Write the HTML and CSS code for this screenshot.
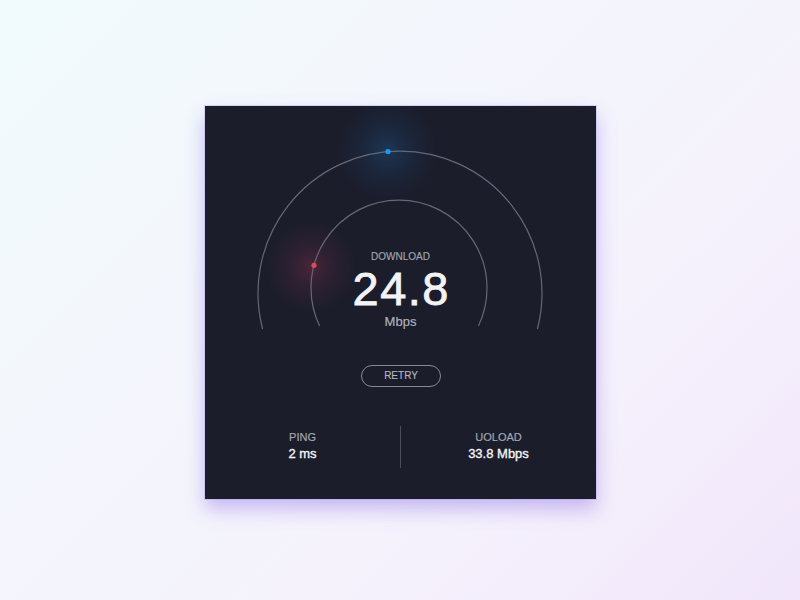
FILE: index.html
```html
<!DOCTYPE html>
<html>
<head>
<meta charset="utf-8">
<link rel="stylesheet" href="styles.css">
</head>
<body>
<div class="page">
  <div class="card">
    <svg class="gauge" width="391" height="393" viewBox="0 0 391 393" xmlns="http://www.w3.org/2000/svg">
      <defs>
        <radialGradient id="gBlue" cx="0.5" cy="0.5" r="0.5">
          <stop offset="0" stop-color="#1d5f96" stop-opacity="0.4"/>
          <stop offset="0.5" stop-color="#1d4f80" stop-opacity="0.18"/>
          <stop offset="1" stop-color="#1d4f80" stop-opacity="0"/>
        </radialGradient>
        <radialGradient id="gRed" cx="0.5" cy="0.5" r="0.5">
          <stop offset="0" stop-color="#7a2c45" stop-opacity="0.5"/>
          <stop offset="0.5" stop-color="#5e2a44" stop-opacity="0.24"/>
          <stop offset="1" stop-color="#5e2a44" stop-opacity="0"/>
        </radialGradient>
      </defs>
      <circle cx="182" cy="44" r="50" fill="url(#gBlue)"/>
      <circle cx="106" cy="161" r="46" fill="url(#gRed)"/>
      <path d="M 57.6 223 A 142 142 0 1 1 332.4 223" fill="none" stroke="#656876" stroke-width="1.2"/>
      <path d="M 114.6 220 A 88 88 0 1 1 273.4 220" fill="none" stroke="#656876" stroke-width="1.2"/>
      <circle cx="183" cy="45.5" r="2.6" fill="#1a9cf2"/>
      <circle cx="109" cy="159.3" r="2.6" fill="#e2475f"/>
    </svg>
    <div class="readout">
      <div class="label">DOWNLOAD</div>
      <div class="value">24.8</div>
      <div class="unit">Mbps</div>
    </div>
    <div class="actions">
      <button class="retry">RETRY</button>
    </div>
    <div class="stats">
      <div class="stat">
        <div class="stat-label">PING</div>
        <div class="stat-value">2 ms</div>
      </div>
      <div class="divider"></div>
      <div class="stat">
        <div class="stat-label">UOLOAD</div>
        <div class="stat-value">33.8 Mbps</div>
      </div>
    </div>
  </div>
</div>
</body>
</html>
```
FILE: styles.css
```css
html, body {
  margin: 0;
  padding: 0;
}
body {
  width: 800px;
  height: 600px;
  overflow: hidden;
  background: linear-gradient(135deg, #f1fbfc 0%, #f4f5fc 45%, #f5f1fc 70%, #f1e6fa 100%);
  font-family: "Liberation Sans", Arial, sans-serif;
}
.page {
  padding: 106px 0 0 205px;
}
.card {
  position: relative;
  width: 391px;
  height: 393px;
  box-sizing: border-box;
  background: #1b1d2b;
  box-shadow: 0 0 0 1px rgba(170, 160, 225, 0.35), 0 10px 18px rgba(140, 110, 230, 0.45);
  display: flex;
  flex-direction: column;
  align-items: center;
  padding-top: 144.5px;
}
.gauge {
  position: absolute;
  left: 0;
  top: 0;
}
.readout {
  position: relative;
  display: flex;
  flex-direction: column;
  align-items: center;
}
.label {
  font-size: 10px;
  line-height: 12px;
  color: #a3a6b0;
  -webkit-text-stroke: 0.15px #a3a6b0;
}
.value {
  margin-top: 4px;
  font-size: 47px;
  line-height: 44px;
  letter-spacing: 1.5px;
  margin-right: -1.5px;
  color: #f3f3f5;
  -webkit-text-stroke: 0.8px #f3f3f5;
}
.unit {
  margin-top: 3px;
  font-size: 13px;
  line-height: 15px;
  color: #aeb1ba;
  -webkit-text-stroke: 0.2px #aeb1ba;
}
.actions {
  position: relative;
  margin-top: 36px;
}
.retry {
  width: 80px;
  height: 22px;
  box-sizing: border-box;
  border: 1px solid #878a94;
  border-radius: 11px;
  background: transparent;
  color: #b4b7bf;
  font-family: "Liberation Sans", Arial, sans-serif;
  font-size: 10px;
  padding: 0;
  margin-left: 1px;
  -webkit-text-stroke: 0.15px #b4b7bf;
}
.stats {
  position: relative;
  margin-top: 39px;
  width: 100%;
  height: 42px;
  display: flex;
  align-items: center;
}
.stat {
  flex: 1;
  display: flex;
  flex-direction: column;
  align-items: center;
}
.divider {
  width: 1px;
  height: 42px;
  background: #4a4d5b;
}
.stat-label {
  font-size: 11px;
  line-height: 14px;
  color: #a6a9b2;
  margin-top: -2px;
  -webkit-text-stroke: 0.15px #a6a9b2;
}
.stat-value {
  margin-top: 2px;
  font-size: 13px;
  line-height: 16px;
  color: #f4f4f6;
  -webkit-text-stroke: 0.35px #f4f4f6;
}
```
